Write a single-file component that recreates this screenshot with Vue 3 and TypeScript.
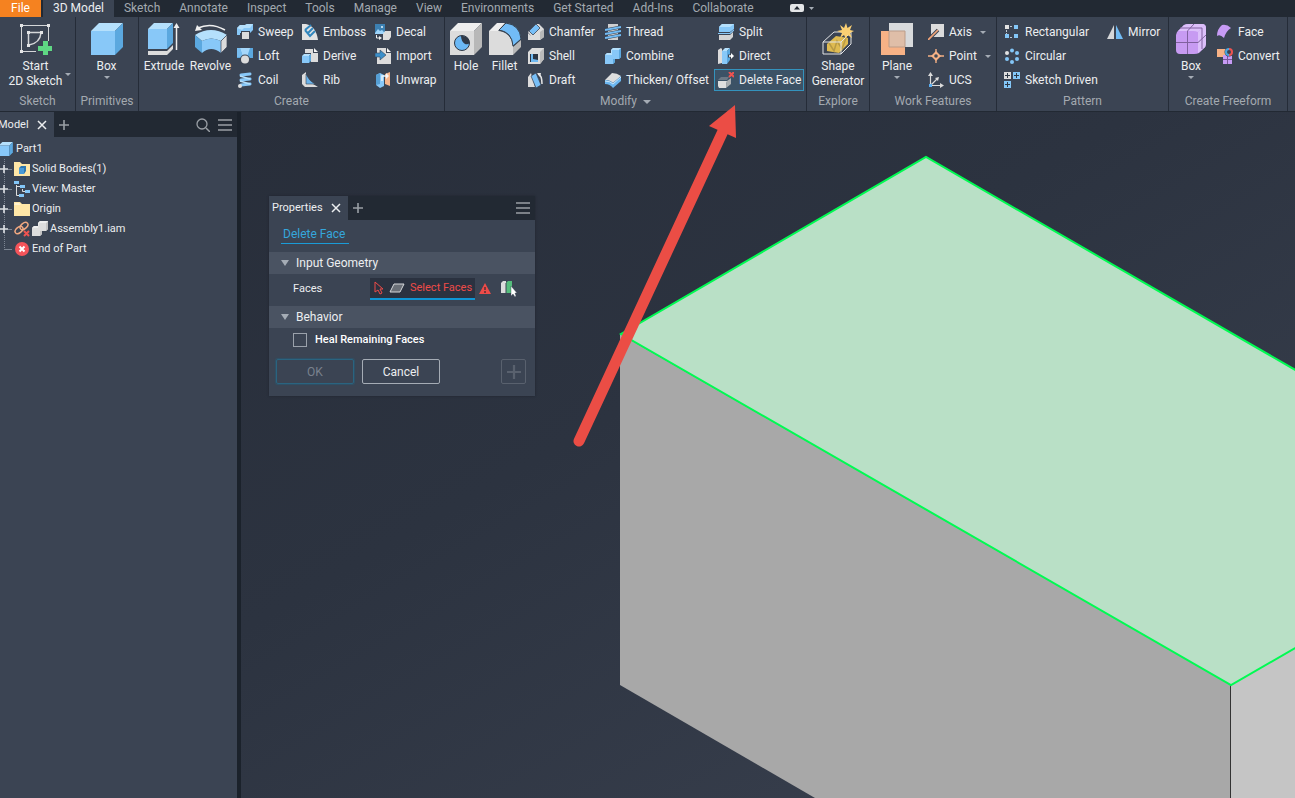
<script setup lang="ts">
import { ref } from 'vue'

interface Tool {
  label: string
  icon: string
  menu?: boolean
  active?: boolean
}
interface BigTool {
  lines: string[]
  icon: string
  menu?: 'below' | 'side'
}
interface Group {
  id: string
  caption: string
  menu?: boolean
  big: BigTool[]
  columns: Tool[][]
}

const tabs = [
  'Sketch', 'Annotate', 'Inspect', 'Tools', 'Manage', 'View',
  'Environments', 'Get Started', 'Add-Ins', 'Collaborate',
]

const groups: Group[] = [
  { id: 'sketch', caption: 'Sketch', big: [{ lines: ['Start', '2D Sketch'], icon: 'sketch', menu: 'side' }], columns: [] },
  { id: 'primitives', caption: 'Primitives', big: [{ lines: ['Box'], icon: 'box', menu: 'below' }], columns: [] },
  {
    id: 'create',
    caption: 'Create',
    big: [{ lines: ['Extrude'], icon: 'extrude' }, { lines: ['Revolve'], icon: 'revolve' }],
    columns: [
      [{ label: 'Sweep', icon: 'sweep' }, { label: 'Loft', icon: 'loft' }, { label: 'Coil', icon: 'coil' }],
      [{ label: 'Emboss', icon: 'emboss' }, { label: 'Derive', icon: 'derive' }, { label: 'Rib', icon: 'rib' }],
      [{ label: 'Decal', icon: 'decal' }, { label: 'Import', icon: 'import' }, { label: 'Unwrap', icon: 'unwrap' }],
    ],
  },
  {
    id: 'modify',
    caption: 'Modify',
    menu: true,
    big: [{ lines: ['Hole'], icon: 'hole' }, { lines: ['Fillet'], icon: 'fillet' }],
    columns: [
      [{ label: 'Chamfer', icon: 'chamfer' }, { label: 'Shell', icon: 'shell' }, { label: 'Draft', icon: 'draft' }],
      [{ label: 'Thread', icon: 'thread' }, { label: 'Combine', icon: 'combine' }, { label: 'Thicken/ Offset', icon: 'thicken' }],
      [{ label: 'Split', icon: 'split' }, { label: 'Direct', icon: 'direct' }, { label: 'Delete Face', icon: 'deleteface', active: true }],
    ],
  },
  { id: 'explore', caption: 'Explore', big: [{ lines: ['Shape', 'Generator'], icon: 'shapegen' }], columns: [] },
  {
    id: 'work',
    caption: 'Work Features',
    big: [{ lines: ['Plane'], icon: 'plane', menu: 'below' }],
    columns: [[{ label: 'Axis', icon: 'axis', menu: true }, { label: 'Point', icon: 'point', menu: true }, { label: 'UCS', icon: 'ucs' }]],
  },
  {
    id: 'pattern',
    caption: 'Pattern',
    big: [],
    columns: [
      [{ label: 'Rectangular', icon: 'rectangular' }, { label: 'Circular', icon: 'circular' }, { label: 'Sketch Driven', icon: 'driven' }],
      [{ label: 'Mirror', icon: 'mirror' }],
    ],
  },
  {
    id: 'freeform',
    caption: 'Create Freeform',
    big: [{ lines: ['Box'], icon: 'freebox', menu: 'below' }],
    columns: [[{ label: 'Face', icon: 'face' }, { label: 'Convert', icon: 'convert' }]],
  },
]

const tree = [
  { label: 'Solid Bodies(1)', icons: ['bodies'], expandable: true },
  { label: 'View: Master', icons: ['view'], expandable: true },
  { label: 'Origin', icons: ['folder'], expandable: true },
  { label: 'Assembly1.iam', icons: ['link', 'assembly'], expandable: true },
  { label: 'End of Part', icons: ['end'], expandable: false },
]

const heal = ref(false)
</script>

<template>
  <div class="app">
    <svg class="sprite" aria-hidden="true">
      <symbol id="i-sketch" viewBox="0 0 32 32">
        <path d="M2 2.500H28M1.500 2V28" stroke="#d5d7d9" fill="none" />
        <path d="M28.500 2V18M2 28.500H16" stroke="#d5d7d9" fill="none" />
        <path d="M9.500 9.500H20M8.500 10V22M21 10Q20 20 9 22" stroke="#d5d7d9" stroke-width="1.500" fill="none" />
        <path d="M0 1h3v3H0zM27 1h3v3h-3zM0 27h3v3H0zM7 8h3v3H7zM20 8h3v3h-3zM7 21h3v3H7z" fill="#e4e5e6" />
        <path d="M23 18h5v5h4v5h-4v5h-5v-5h-5v-5h5z" fill="#5fd884" />
      </symbol>
      <symbol id="i-box" viewBox="0 0 32 32">
        <path d="M0 8L8 0H32L24 8z" fill="#b5e0fc" />
        <path d="M0 8H24V32H0z" fill="#88c8f8" />
        <path d="M24 8L32 0V24L24 32z" fill="#5ba8df" />
      </symbol>
      <symbol id="i-extrude" viewBox="0 0 32 32">
        <path d="M0 6L6 0H25L19 6z" fill="#b5e0fc" />
        <path d="M0 6H19V26H0z" fill="#88c8f8" />
        <path d="M19 6L25 0V20L19 26z" fill="#5ba8df" />
        <path d="M0 28H19V32H0zM19 28L25 22V26L19 32z" fill="#dcdcdc" />
        <path d="M28.500 27V3" stroke="#f0f0f0" stroke-width="1.500" />
        <path d="M25.500 5L28.500 0L31.500 5z" fill="#f0f0f0" />
      </symbol>
      <symbol id="i-revolve" viewBox="0 0 32 32">
        <path d="M0 12Q16 2 32 12L26 18Q16 13 7 18z" fill="#b5e0fc" />
        <path d="M0 12L7 18V30L0 24z" fill="#5ba8df" />
        <path d="M7 18Q16 13 26 18V30Q16 22 7 30z" fill="#88c8f8" />
        <path d="M26 18L32 12V24L26 30z" fill="#dcdcdc" stroke="#3b4453" stroke-width=".7" />
        <path d="M3 5Q16-1 30 7" stroke="#f0f0f0" stroke-width="1.500" fill="none" />
        <path d="M0 8L2 2L7 7z" fill="#f0f0f0" />
      </symbol>
      <symbol id="i-sweep" viewBox="0 0 16 16">
        <path d="M0 4L3 1H8L10 0H16V6L13 9H3V11H0z" fill="#88c8f8" />
        <path d="M0 4L3 1H8L10 0H16L13 4H7L5 6z" fill="#b5e0fc" />
        <path d="M4 7H13V16H4z" fill="#3b4453" />
        <path d="M5 8H12V15H5z" fill="#dcdcdc" />
      </symbol>
      <symbol id="i-loft" viewBox="0 0 16 16">
        <path d="M0 0H16V10H0z" fill="#5ba8df" />
        <path d="M3 0H13L10 9H6z" fill="#a5d7fb" />
        <path d="M0 0H3L6 9H0z" fill="#78bdf0" />
        <circle cx="8" cy="11.500" r="5" fill="#3b4453" />
        <circle cx="8" cy="11.500" r="4" fill="#dcdcdc" />
      </symbol>
      <symbol id="i-coil" viewBox="0 0 16 16">
        <path d="M4 3L13 2M4 8L13 7M4 13L13 12" stroke="#88c8f8" stroke-width="3" stroke-linecap="round" />
        <path d="M3 4L13 7M3 9L13 12" stroke="#b5e0fc" stroke-width="1.500" />
        <circle cx="3" cy="14" r="2" fill="#dcdcdc" />
      </symbol>
      <symbol id="i-emboss" viewBox="0 0 16 16">
        <path d="M0 0H4Q14 2 16 16H0z" fill="#e2e2e2" />
        <path d="M3 6L9 1M3 6L8 12L13 7M6 9L11 4" stroke="#3186bd" stroke-width="2" fill="none" />
      </symbol>
      <symbol id="i-derive" viewBox="0 0 16 16">
        <path d="M3 1H11V5H16V14H9V5H3z" fill="#dcdcdc" />
        <path d="M12 0L16 4H12z" fill="#f2f2f2" />
        <path d="M0 8L2 6H9L7 8z" fill="#b5e0fc" />
        <path d="M0 8H7V15H0z" fill="#88c8f8" />
        <path d="M7 8L9 6V13L7 15z" fill="#5ba8df" />
      </symbol>
      <symbol id="i-rib" viewBox="0 0 16 16">
        <path d="M0 3L4 0V11L11 12L16 15H3L0 12z" fill="#dcdcdc" />
        <path d="M4 2Q7 9 13 12H4z" fill="#6bb4ec" stroke="#3b4453" stroke-width=".6" />
      </symbol>
      <symbol id="i-decal" viewBox="0 0 16 16">
        <path d="M0 0H10V10H0z" fill="#3c80b2" />
        <path d="M0 9L3 5L5 7L7 6L10 9V10H0z" fill="#9ed5fb" />
        <circle cx="7" cy="3" r="1" fill="#e6f4fe" />
        <path d="M8 10L10 7H16V13L14 16H8z" fill="#dcdcdc" />
        <path d="M1.500 11V14H5" stroke="#f0f0f0" fill="none" />
        <path d="M4 12L7 14L4 16z" fill="#f0f0f0" />
      </symbol>
      <symbol id="i-import" viewBox="0 0 16 16">
        <path d="M2 0H11V5H16V16H2z" fill="#dcdcdc" />
        <path d="M12 0L16 4H12z" fill="#f5f5f5" />
        <path d="M0 5H5V2L11 7L5 12V9H0z" fill="#3b8fca" stroke="#3b4453" stroke-width=".6" />
      </symbol>
      <symbol id="i-unwrap" viewBox="0 0 16 16">
        <path d="M1 3L5 1L9 3V14L5 16L1 13z" fill="#88c8f8" />
        <path d="M1 3L5 1V12L1 13z" fill="#559fd5" />
        <path d="M10 2L15 0V14L10 12z" fill="#f6b58c" />
        <path d="M7 9V4H12" stroke="#e9f3fa" stroke-width="1.500" fill="none" />
        <path d="M11 1L14 4L11 7z" fill="#f5f5f5" />
      </symbol>
      <symbol id="i-hole" viewBox="0 0 32 32">
        <path d="M0 8L8 0H32L24 8z" fill="#eeeeee" />
        <path d="M0 8H24V32H0z" fill="#dcdcdc" />
        <path d="M24 8L32 0V24L24 32z" fill="#b8b8b8" />
        <circle cx="12" cy="20" r="7.500" fill="#6bb8f5" stroke="#2e3642" />
        <path d="M11 13Q19 12 19.500 20Q18 22 15 21Q11 18 11 13" fill="#303947" />
      </symbol>
      <symbol id="i-fillet" viewBox="0 0 32 32">
        <path d="M0 8H10Q23 10 24 24V32H0z" fill="#dcdcdc" />
        <path d="M0 8L8 0H16L9 8z" fill="#eeeeee" />
        <path d="M24 24L32 17V24L24 32z" fill="#b8b8b8" />
        <path d="M10 7L17 0Q31 2 32 16L24 23Q23 9 10 7z" fill="#72bcf7" stroke="#35404d" />
      </symbol>
      <symbol id="i-chamfer" viewBox="0 0 16 16">
        <path d="M0 9L3 12V16H0zM0 8L8 0H11L16 5V13L12 16H3V12z" fill="#dcdcdc" />
        <path d="M12 8L16 5V13L12 16z" fill="#b8b8b8" />
        <path d="M1 7L8 0L12 4L5 11z" fill="#78bff7" stroke="#3b4453" stroke-width=".8" />
      </symbol>
      <symbol id="i-shell" viewBox="0 0 16 16">
        <path d="M0 4L4 0H16V11L12 16H0z" fill="#dcdcdc" />
        <path d="M12 4L16 0V11L12 16z" fill="#bbbbbb" />
        <path d="M2 6H10V14H2z" fill="#2b3543" />
        <path d="M3 6H5V11L10 12V14H3z" fill="#70baf2" />
      </symbol>
      <symbol id="i-draft" viewBox="0 0 16 16">
        <path d="M0 5L3 1L7 15H0z" fill="#dcdcdc" />
        <path d="M3 4L8 1L13 13L8 16z" fill="#78bff7" stroke="#3b4453" stroke-width=".7" />
        <path d="M10 2Q14 3 14 12" fill="none" stroke="#e5e5e5" stroke-width="1.500" />
        <path d="M9 1L13 1L12 5z" fill="#e5e5e5" />
      </symbol>
      <symbol id="i-thread" viewBox="0 0 16 16">
        <path d="M3 0H13V16H3z" fill="#cfd0d1" />
        <path d="M0 6L16 3M0 10L16 7M0 14L16 11" stroke="#3b4453" stroke-width="3" />
        <path d="M0 6L16 3M0 10L16 7M0 14L16 11" stroke="#72bcf5" stroke-width="1.800" />
      </symbol>
      <symbol id="i-combine" viewBox="0 0 16 16">
        <path d="M0 7L2 5H6V2L8 0H16V9L14 11H10V14L8 16H0z" fill="#88c8f8" />
        <path d="M0 7L2 5H6V2L8 0H16L14 2H7V7z" fill="#b5e0fc" />
        <path d="M16 0V9L14 11V2zM10 11V14L8 16V11z" fill="#5ba8df" />
      </symbol>
      <symbol id="i-thicken" viewBox="0 0 16 16">
        <path d="M0 8L7 1Q12 1 16 4L8 11Q5 8 0 8z" fill="#dedede" />
        <path d="M0 8Q5 8 8 11L16 4V9L8 16Q5 12 0 12z" fill="#6bb6f0" />
        <path d="M0 9Q5 9 8 12L16 5" fill="none" stroke="#c8e6fa" />
      </symbol>
      <symbol id="i-split" viewBox="0 0 16 16">
        <path d="M1 3L4 0H16V5L12 8H1z" fill="#88c8f8" />
        <path d="M1 3L4 0H16L12 3z" fill="#b5e0fc" />
        <path d="M1 11H12L15 8V13L12 16H1z" fill="#d2d3d4" />
        <path d="M0 9.500H12L16 6" stroke="#88c8f8" stroke-width="1.200" fill="none" />
      </symbol>
      <symbol id="i-direct" viewBox="0 0 16 16">
        <path d="M0 2L3 0L4 1V15L0 16z" fill="#dcdcdc" />
        <path d="M4 3L7 0H12L9 3z" fill="#b5e0fc" />
        <path d="M4 3H9V16H4z" fill="#88c8f8" />
        <path d="M9 3L12 0V12L9 16z" fill="#5ba8df" />
        <path d="M10 8H15" stroke="#3b4453" stroke-width="3" />
        <path d="M11 8H15" stroke="#fff" stroke-width="1.500" />
        <path d="M13 5L16 8L13 11z" fill="#fff" />
      </symbol>
      <symbol id="i-deleteface" viewBox="0 0 16 16">
        <path d="M0 9H9Q8 11 8 16H1L0 14z" fill="#dedede" />
        <path d="M0 8L3 5H11L9 8z" fill="#6b7885" />
        <path d="M9 9L13 6V12L8 16Q8 11 9 9z" fill="#a9adb0" />
        <path d="M11 0L16 5M16 0L11 5" stroke="#ef5350" stroke-width="2" />
      </symbol>
      <symbol id="i-shapegen" viewBox="0 0 32 32">
        <path d="M5 21L14 13L26 15V21L17 30L5 28z" fill="#dfbb51" />
        <path d="M7 20L12 28L15 18L20 26L24 15" stroke="#b89a45" stroke-width="1.500" fill="none" />
        <path d="M1 19L12 9H29L19 19zM1 19V31H19V19M19 31L29 21V9" fill="none" stroke="#e3e4e6" />
        <path d="M24 0L25.500 5L30 2L28 7L32 8L28 10L30 15L25.500 12L24 16L22 12L18 15L20 10L15 8L20 7L18 2L22 5z" fill="#fbd073" />
      </symbol>
      <symbol id="i-plane" viewBox="0 0 32 32">
        <path d="M8 0H32V24H8z" fill="#d8dadc" />
        <path d="M0 8H24V32H0z" fill="#f7b286" />
        <path d="M8 8H24V24H8z" fill="#dfbea8" stroke="#bb9c89" />
      </symbol>
      <symbol id="i-axis" viewBox="0 0 16 16">
        <path d="M3 0H16V13H3z" fill="#dcdcdc" />
        <path d="M1 15L10 6" stroke="#3b4453" stroke-width="3.500" />
        <path d="M0 16L10 6" stroke="#f2a478" stroke-width="1.700" />
      </symbol>
      <symbol id="i-point" viewBox="0 0 16 16">
        <path d="M8 1V15M0 8H16" stroke="#f2ae84" stroke-width="1.400" />
        <path d="M8 3L13 8L8 13L3 8z" fill="#f7b286" />
        <circle cx="8" cy="8" r="1.800" fill="#414852" />
      </symbol>
      <symbol id="i-ucs" viewBox="0 0 16 16">
        <path d="M2.500 13V3M3 13.500H14M3 13L9 7" stroke="#dcdcdc" stroke-width="1.200" />
        <path d="M0 4L2.500 0L5 4zM12 11L16 13.500L12 16zM7 6L11 5L10 9z" fill="#dcdcdc" />
        <path d="M1 12H4V15H1z" fill="#5baef0" />
      </symbol>
      <symbol id="i-rectangular" viewBox="0 0 16 16">
        <path d="M2.500 6V10M6 2.500H9M6 13.500H9" stroke="#bfc7cf" stroke-dasharray="2 1" />
        <path d="M1 1h4v4H1z" fill="#e2e2e2" />
        <path d="M10 1h4v4h-4zM1 10h4v4H1zM10 10h4v4h-4z" fill="#83c6f7" />
      </symbol>
      <symbol id="i-circular" viewBox="0 0 16 16">
        <circle cx="8" cy="2.500" r="2" fill="#83c6f7" />
        <circle cx="3" cy="5" r="2" fill="#e2e2e2" />
        <circle cx="13" cy="5" r="2" fill="#83c6f7" />
        <circle cx="3" cy="11" r="2" fill="#83c6f7" />
        <circle cx="13" cy="11" r="2" fill="#83c6f7" />
        <circle cx="8" cy="14" r="2" fill="#83c6f7" />
      </symbol>
      <symbol id="i-driven" viewBox="0 0 16 16">
        <path d="M0 0h7v7H0z" fill="#dcdcdc" />
        <path d="M9 0h7v7H9zM0 9h7v7H0z" fill="#83c6f7" />
        <path d="M1 3.500H6M3.500 1V6M10 3.500H15M12.500 1V6M1 12.500H6M3.500 10V15" stroke="#2d3846" />
      </symbol>
      <symbol id="i-mirror" viewBox="0 0 16 16">
        <path d="M7 1V15H0z" fill="#d5d7d9" />
        <path d="M9 1V15H16z" fill="#72bcf5" />
      </symbol>
      <symbol id="i-freebox" viewBox="0 0 32 32">
        <path d="M1 12Q1 9 4 7L9 2Q11 1 14 1H27Q31 1 31 5V21Q31 24 28 26L24 30Q22 31 19 31H5Q1 31 1 27z" fill="#c79bf2" />
        <path d="M3 8L9 2Q11 1 14 1H27Q29 1 30 2L23 9Q21 8 18 8z" fill="#dcc0fa" />
        <path d="M23 9L30 2Q31 3 31 6V21Q31 24 28 26L23 30z" fill="#dcc0fa" />
        <path d="M1 19.500H23L31 12M12.500 31V8L19 1M5 5H27V26" fill="none" stroke="#80619f" />
      </symbol>
      <symbol id="i-face" viewBox="0 0 16 16">
        <path d="M5 1Q10 0 14 4Q9 7 7 14Q3 10 0 12Q0 5 5 1z" fill="#c79bf5" />
      </symbol>
      <symbol id="i-convert" viewBox="0 0 16 16">
        <path d="M0 1H9V9H0z" fill="#f7b286" />
        <path d="M6 7H15V16H6z" fill="#c79bf5" />
        <path d="M10.500 7V16M6 11.500H15" stroke="#785897" />
        <circle cx="12" cy="4" r="4.500" fill="#3b4453" />
        <path d="M12 1A3 3 0 0 0 12 7" stroke="#4ba6df" stroke-width="2" fill="none" />
        <path d="M12 1A3 3 0 0 1 12 7" stroke="#ec5350" stroke-width="2" fill="none" />
      </symbol>
      <symbol id="i-bodies" viewBox="0 0 16 16">
        <path d="M0 1H6L8 3H16V15H0z" fill="#ffe7a7" />
        <path d="M5 7L7 5H12V10L10 13H5z" fill="#2f78b0" />
        <path d="M5 7H10V13H5z" fill="#4a9bd8" />
      </symbol>
      <symbol id="i-view" viewBox="0 0 16 16">
        <path d="M2.500 4V14.500H5M2.500 5.500H6M8.500 8V10.500H11" stroke="#dcdcdc" fill="none" />
        <path d="M0 0h5v3H0zM6 4h5v3H6zM11 9h5v3h-5zM5 13h5v3H5z" fill="#83c6f7" />
      </symbol>
      <symbol id="i-folder" viewBox="0 0 16 16">
        <path d="M0 1H6L8 3H16V15H0z" fill="#ffe7a7" />
        <path d="M1 2H5L7 4H0" fill="#fff4d0" />
      </symbol>
      <symbol id="i-link" viewBox="0 0 16 16">
        <ellipse cx="5" cy="9" rx="4.500" ry="2.800" transform="rotate(-40 5 9)" fill="none" stroke="#f2a981" stroke-width="1.500" />
        <ellipse cx="10" cy="5" rx="4.500" ry="2.800" transform="rotate(-40 10 5)" fill="none" stroke="#f2a981" stroke-width="1.500" />
        <path d="M10 10L15 15M15 10L10 15" stroke="#ef5350" stroke-width="2" />
      </symbol>
      <symbol id="i-assembly" viewBox="0 0 16 16">
        <path d="M0 7L2 5H6V2L8 0H16V8L14 10H10V13L8 15H0z" fill="#dddddd" />
        <path d="M14 2L16 0V8L14 10zM8 10H10V13L8 15z" fill="#c4c4c4" />
        <path d="M0 7L2 5H6V2L8 0H16L14 2H7L6 7z" fill="#eeeeee" />
      </symbol>
      <symbol id="i-end" viewBox="0 0 16 16">
        <circle cx="8" cy="8" r="7" fill="#f4545a" />
        <path d="M5.500 5.500L10.500 10.500M10.500 5.500L5.500 10.500" stroke="#fff" stroke-width="2" />
      </symbol>
      <symbol id="i-close" viewBox="0 0 10 10">
        <path d="M1 1L9 9M9 1L1 9" stroke="currentColor" stroke-width="1.500" />
      </symbol>
      <symbol id="i-plus" viewBox="0 0 10 10">
        <path d="M5 0V10M0 5H10" stroke="currentColor" stroke-width="1.600" />
      </symbol>
      <symbol id="i-search" viewBox="0 0 14 14">
        <circle cx="6" cy="6" r="5" stroke="currentColor" stroke-width="1.300" fill="none" />
        <path d="M10 10L14 14" stroke="currentColor" stroke-width="1.500" />
      </symbol>
      <symbol id="i-menu" viewBox="0 0 14 12">
        <path d="M0 1H14M0 6H14M0 11H14" stroke="currentColor" stroke-width="1.600" />
      </symbol>
    </svg>

    <nav class="tabs" aria-label="Ribbon tabs">
      <button class="file" type="button">File</button>
      <button class="current" type="button">3D Model</button>
      <button v-for="t in tabs" :key="t" class="tab" type="button">{{ t }}</button>
      <button class="minimize" type="button" aria-label="Minimize ribbon">
        <svg width="24" height="8" viewBox="0 0 24 8">
          <rect x="0" y="0" width="14" height="8" rx="2" fill="#e4e6e8" />
          <path d="M4 5.500L7 2L10 5.500z" fill="#222933" />
          <path d="M19 3H24L21.500 6z" fill="#a5acb5" />
        </svg>
      </button>
    </nav>

    <header class="ribbon">
      <section v-for="g in groups" :key="g.id" class="group" :class="g.id">
        <div class="body">
          <button v-for="b in g.big" :key="b.icon" class="big" type="button">
            <svg width="32" height="32"><use :href="'#i-' + b.icon" /></svg>
            <span v-for="l in b.lines" :key="l">{{ l }}</span>
            <i v-if="b.menu" class="caret" :class="b.menu"></i>
          </button>
          <div v-for="(c, n) in g.columns" :key="n" class="column">
            <button v-for="t in c" :key="t.label" class="tool" :class="{ active: t.active }" type="button">
              <svg width="16" height="16"><use :href="'#i-' + t.icon" /></svg>
              <span>{{ t.label }}</span>
              <i v-if="t.menu" class="caret"></i>
            </button>
          </div>
        </div>
        <h2 class="caption">{{ g.caption }}<i v-if="g.menu" class="caret large"></i></h2>
      </section>
    </header>

    <main class="work-area">
      <aside class="browser">
        <div class="dock-head">
          <div class="dock-tab">
            <span>Model</span>
            <button type="button" aria-label="Close Model"><svg width="10" height="10"><use href="#i-close" /></svg></button>
          </div>
          <button class="add" type="button" aria-label="Add panel"><svg width="10" height="10"><use href="#i-plus" /></svg></button>
          <button class="push" type="button" aria-label="Search"><svg width="14" height="14"><use href="#i-search" /></svg></button>
          <button type="button" aria-label="Menu"><svg width="14" height="12"><use href="#i-menu" /></svg></button>
        </div>
        <div class="tree">
          <div class="root"><svg width="13" height="14" viewBox="3 0 29 32"><path d="M0 8L8 0H32L24 8z" fill="#b5e0fc" /><path d="M0 8H24V32H0z" fill="#88c8f8" /><path d="M24 8L32 0V24L24 32z" fill="#5ba8df" /></svg>Part1</div>
          <ul>
            <li v-for="n in tree" :key="n.label">
              <span class="branch">
                <svg v-if="n.expandable" width="8" height="8" viewBox="0 0 8 8"><path d="M4 0V8M0 4H8" stroke="#dfe2e6" stroke-width="1.600" /></svg>
              </span>
              <svg v-for="i in n.icons" :key="i" width="16" height="16"><use :href="'#i-' + i" /></svg>
              <span class="node">{{ n.label }}</span>
            </li>
          </ul>
        </div>
      </aside>

      <div class="viewport">
        <svg class="scene" viewBox="0 -1 1054 686" preserveAspectRatio="xMinYMin slice" aria-label="Solid body">
          <path d="M379 221L990 572V685H574L379 572z" fill="#a8a8a8" />
          <path d="M990 572L1060 532V685H990z" fill="#c5c5c5" />
          <path d="M989.500 572V685" stroke="#333" />
          <path d="M380 221L685 44L1070 266V526L990 572z" fill="#b9e0c6" />
          <path d="M1070 266L685 44L380 221L990 572L1070 526" fill="none" stroke="#00fb52" stroke-width="2" />
        </svg>

        <form class="properties" @submit.prevent>
          <div class="dock-head">
            <div class="dock-tab">
              <span>Properties</span>
              <button type="button" aria-label="Close Properties"><svg width="10" height="10"><use href="#i-close" /></svg></button>
            </div>
            <button class="add" type="button" aria-label="Add panel"><svg width="10" height="10"><use href="#i-plus" /></svg></button>
            <button class="push" type="button" aria-label="Menu"><svg width="14" height="12"><use href="#i-menu" /></svg></button>
          </div>
          <div class="crumb"><a href="#">Delete Face</a></div>
          <h3><i class="caret fold"></i>Input Geometry</h3>
          <div class="faces">
            <span id="faces-label">Faces</span>
            <button class="selector" type="button" aria-labelledby="faces-label">
              <svg width="10" height="14" viewBox="0 0 10 14"><path d="M1 1V11L4 9L6 13L8 12L6 8H9z" fill="none" stroke="#ee4b48" /></svg>
              <svg width="16" height="10" viewBox="0 0 16 10"><path d="M5 1H15L11 9H1z" fill="#6a6f77" stroke="#d5d7da" /></svg>
              <span>Select Faces</span>
            </button>
            <svg width="12" height="12" viewBox="0 0 12 12"><path d="M6 0L12 11H0z" fill="#ee4b48" /><path d="M6 4V7M6 8V10" stroke="#4b2c34" stroke-width="1.400" /></svg>
            <button class="bodies" type="button" aria-label="Select bodies">
              <svg width="16" height="16" viewBox="0 0 16 16">
                <path d="M0 2L2 0H5V12H0z" fill="#dcdcdc" /><path d="M5 2L7 0H11V12H5z" fill="#55bd7c" /><path d="M5 2V13" stroke="#3b4453" />
                <path d="M10 5V15L12 13L14 16L15 15L14 12H16z" fill="#fff" stroke="#3b4453" stroke-width=".4" />
              </svg>
            </button>
          </div>
          <h3><i class="caret fold"></i>Behavior</h3>
          <label class="heal"><input v-model="heal" type="checkbox" />Heal Remaining Faces</label>
          <div class="actions">
            <button class="ok" type="submit" disabled>OK</button>
            <button class="cancel" type="button">Cancel</button>
            <button class="apply" type="button" disabled aria-label="Apply and create new"><svg width="14" height="14"><use href="#i-plus" /></svg></button>
          </div>
        </form>
      </div>
    </main>

    <svg class="pointer" viewBox="0 0 1295 798" preserveAspectRatio="xMinYMin slice" aria-hidden="true">
      <path d="M579 441L724 129" stroke="#eb4d45" stroke-width="11" stroke-linecap="round" />
      <path d="M735 105L709 126L736 138z" fill="#eb4d45" />
    </svg>
  </div>
</template>

<style>
html,
body,
#app {
  height: 100%;
}
body {
  margin: 0;
  overflow: hidden;
}
</style>

<style scoped>
.app {
  position: relative;
  display: flex;
  flex-direction: column;
  height: 100%;
  background: #222933;
  color: #eceef0;
  font: 12px/16px Roboto, "Noto Sans", sans-serif;
  overflow: hidden;
}
.sprite {
  position: absolute;
  width: 0;
  height: 0;
}
svg {
  display: block;
  flex: none;
}
button {
  margin: 0;
  padding: 0;
  border: 0;
  background: none;
  color: inherit;
  font: inherit;
  white-space: nowrap;
}
.tabs {
  display: flex;
  flex: none;
  height: 17px;
  color: #a3a9b0;
}
.tabs button {
  padding: 0 10px 1px;
  line-height: 16px;
}
.tabs .file {
  width: 41px;
  margin-right: 2px;
  background: #f58220;
  color: #fff;
}
.tabs .current {
  margin-right: 1px;
  background: #3b4453;
  color: #eceef0;
}
.tabs .tab {
  padding-left: 9px;
}
.tabs .minimize {
  margin-left: 16px;
}
.ribbon {
  box-sizing: border-box;
  display: flex;
  flex: none;
  height: 95px;
  background: #3b4453;
  border-bottom: 1px solid #222933;
}
.group {
  box-sizing: border-box;
  flex: none;
  border-right: 1px solid #252c38;
}
.body {
  display: grid;
  height: 72px;
  padding-top: 3px;
}
.caption {
  display: flex;
  align-items: center;
  justify-content: center;
  gap: 6px;
  height: 19px;
  margin: 0;
  font-size: 12px;
  font-weight: 400;
  line-height: 21px;
  color: #a3a9b0;
}
.sketch { width: 76px; }
.primitives { width: 63px; }
.create { width: 306px; }
.modify { width: 362px; }
.explore { width: 63px; }
.work { width: 127px; }
.pattern { width: 172px; }
.freeform { width: 119px; }
.sketch .body { padding-right: 4px; }
.primitives .body { padding-right: 1px; }
.create .body { grid-template-columns: 48px 45px 65px 73px 1fr; padding-left: 1px; }
.modify .body { grid-template-columns: 38px 39px 77px 113px 1fr; padding-left: 2px; padding-right: 2px; }
.work .body { grid-template-columns: 54px 1fr; }
.pattern .body { grid-template-columns: 103px 1fr; padding-left: 3px; }
.freeform .body { grid-template-columns: 44px 1fr; }
.big {
  position: relative;
  display: flex;
  flex-direction: column;
  align-items: center;
  padding-top: 3px;
  line-height: 15px;
}
.big svg {
  margin-bottom: 4px;
}
.caret {
  width: 0;
  border: 3px solid transparent;
  border-top-color: #a5acb5;
  border-bottom: 0;
}
.caret.large {
  border-width: 4px 4px 0;
}
.caret.fold {
  border-width: 6px 4px 0;
}
.caret.below {
  margin-top: 2px;
}
.caret.side {
  position: absolute;
  right: 0;
  top: 53px;
}
.column {
  display: flex;
  flex-direction: column;
}
.tool {
  box-sizing: border-box;
  display: flex;
  align-items: center;
  gap: 5px;
  height: 22px;
  margin: 1px 0;
  padding-left: 3px;
  border: 1px solid transparent;
}
.tool .caret {
  margin-left: 3px;
}
.tool.active {
  background: #3c5266;
  border-color: #3493bd;
}
.work-area {
  display: flex;
  flex: 1;
  min-height: 0;
}
.browser {
  box-sizing: border-box;
  width: 241px;
  flex: none;
  background: #3b4453;
  border-right: 4px solid #1b222b;
  font-size: 11px;
}
.dock-head {
  display: flex;
  align-items: center;
  gap: 8px;
  height: 25px;
  padding-right: 5px;
  background: #222933;
  color: #9a9fa5;
  font-size: 11px;
}
.dock-tab {
  display: flex;
  align-items: center;
  gap: 8px;
  height: 100%;
  padding-right: 7px;
  background: #3b4453;
  color: #eceef0;
}
.add {
  margin-left: -3px;
}
.push {
  margin-left: auto;
}
.browser .dock-tab span {
  margin-left: -2px;
}
.tree {
  padding-top: 2px;
  line-height: 20px;
}
.root {
  display: flex;
  align-items: center;
  gap: 3px;
}
.tree ul {
  margin: 0;
  padding: 0;
  list-style: none;
}
.tree li {
  display: flex;
  align-items: center;
  gap: 2px;
}
.branch {
  display: flex;
  align-items: center;
  width: 12px;
  height: 20px;
  background: linear-gradient(#7c8592, #7c8592) 8px 10px / 4px 1px no-repeat,
    repeating-linear-gradient(#7c8592 0 1px, transparent 1px 2px) 4px 0 / 1px 20px no-repeat;
}
li:last-child .branch {
  background: linear-gradient(#7c8592, #7c8592) 5px 10px / 7px 1px no-repeat,
    repeating-linear-gradient(#7c8592 0 1px, transparent 1px 2px) 4px 0 / 1px 11px no-repeat;
}
.viewport {
  position: relative;
  flex: 1;
  min-width: 0;
  background: linear-gradient(150deg, #282e3a, #2c3340 40%, #373e4c 85%);
}
.scene {
  width: 100%;
  height: 100%;
}
.properties {
  position: absolute;
  left: 28px;
  top: 84px;
  width: 266px;
  background: #3b4453;
  font-size: 11px;
  box-shadow: 0 0 2px #1f252e;
}
.properties .dock-head {
  height: 24px;
}
.properties .dock-tab {
  padding-left: 3px;
}
.crumb {
  height: 32px;
  padding: 6px 12px 0;
  box-sizing: border-box;
  font-size: 12px;
}
.crumb a {
  display: inline-block;
  padding: 0 4px 0 2px;
  line-height: 17px;
  color: #35a7dc;
  text-decoration: none;
  border-bottom: 1px solid #1a9bd7;
}
h3 {
  display: flex;
  align-items: center;
  gap: 7px;
  height: 22px;
  margin: 0;
  padding-left: 12px;
  background: #4a5362;
  font-size: 12px;
  font-weight: 400;
}
.faces {
  display: flex;
  align-items: center;
  height: 32px;
  box-sizing: border-box;
  padding: 0 0 3px 24px;
}
.faces > span {
  width: 77px;
}
.selector {
  display: flex;
  align-items: center;
  gap: 5px;
  height: 22px;
  width: 105px;
  box-sizing: border-box;
  margin-right: 4px;
  padding-left: 4px;
  background: #2b3240;
  border-bottom: 2px solid #0f95d4;
  color: #ee4b48;
}
.bodies {
  margin-left: 10px;
}
.heal {
  display: flex;
  align-items: center;
  gap: 8px;
  height: 24px;
  padding-left: 24px;
  color: #fff;
  font-weight: 500;
}
.heal input {
  appearance: none;
  width: 14px;
  height: 14px;
  box-sizing: border-box;
  margin: 0;
  border: 1px solid #9aa1ab;
}
.actions {
  display: flex;
  gap: 8px;
  padding: 7px 9px 12px 7px;
  font-size: 12px;
}
.actions button {
  box-sizing: border-box;
  width: 78px;
  height: 25px;
  border: 1px solid #a5acb5;
  border-radius: 2px;
}
.actions .ok {
  border-color: #2a6480;
  box-shadow: 0 0 1px 1px #2f5268;
  color: #79818d;
}
.actions .apply {
  display: grid;
  place-items: center;
  width: 25px;
  margin-left: auto;
  border-color: #59616e;
  color: #59616e;
}
.pointer {
  position: absolute;
  inset: 0;
  width: 100%;
  height: 100%;
  pointer-events: none;
}
</style>
